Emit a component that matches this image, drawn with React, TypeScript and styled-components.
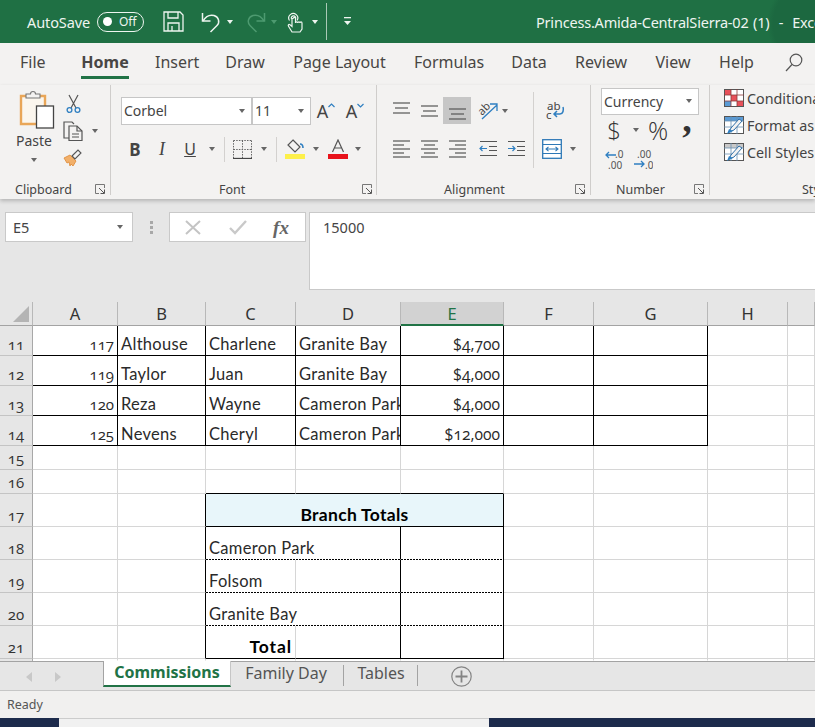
import React from "react";
import styled, { createGlobalStyle } from "styled-components";

const ui = `"Noto Sans", "Open Sans", sans-serif`;
const cellFont = `Lato, "Noto Sans", sans-serif`;
const figFont = `"Open Sans", "Noto Sans", sans-serif`;

const Global = createGlobalStyle`
  html, body { margin: 0; padding: 0; background: #fff; }
  * { box-sizing: border-box; }
`;

const Page = styled.div`
  width: 815px; height: 727px; overflow: hidden;
  display: flex; flex-direction: column;
  font-family: ${ui}; color: #444; background: #f3f2f1;
`;

/* ---------- title bar ---------- */
const TitleBar = styled.header`
  height: 43px; flex: none; display: flex; align-items: center;
  padding-left: 27px; color: #eef5f0;
  background: radial-gradient(circle at 815px 24px, #1c6840 0, #1c6840 42px, #1f7044 48px);
`;
const AutoSave = styled.span`font-size: 14.5px; width: 70px; flex: none; letter-spacing: -0.1px;`;
const Toggle = styled.span`
  width: 47px; height: 20px; flex: none; border: 1.3px solid #eef5f0; border-radius: 10px;
  display: flex; align-items: center; padding-left: 5px; gap: 7px; font-size: 12px;
`;
const Knob = styled.i`width: 9px; height: 9px; border-radius: 50%; background: #fff;`;
const Qat = styled.span<{ $w: number }>`
  width: ${p => p.$w}px; height: 30px; flex: none;
  display: flex; align-items: center; justify-content: center;
`;
const QatDivider = styled.i`width: 1px; height: 37px; background: #a9c9b6; flex: none;`;
const DocTitle = styled.span`
  font-size: 14.5px; white-space: pre; margin-left: 167px; letter-spacing: -0.2px;
  word-spacing: 1px; flex: none;
`;

/* ---------- tabs ---------- */
const TabStrip = styled.nav`
  height: 42px; flex: none; display: flex; align-items: flex-start;
  padding: 6px 0 0 20px; gap: 28px; background: #f3f2f1;
`;
const Tab = styled.span<{ $on?: boolean; $w: number }>`
  width: ${p => p.$w}px; height: 30px; flex: none; line-height: 26px; white-space: nowrap;
  font-size: 16px; font-weight: ${p => (p.$on ? 700 : 400)}; color: #484644;
  border-bottom: 3px solid ${p => (p.$on ? "#217346" : "transparent")};
  text-align: center;
  ${p => (p.$on ? "margin: 0 -2px 0 8px;" : "")}
`;
const TabSearch = styled.span`margin-left: 3px; padding-top: 4px; line-height: 0; flex: none;`;

/* ---------- ribbon ---------- */
const Ribbon = styled.section`
  height: 114px; flex: none; display: flex; background: #f3f2f1;
  box-shadow: 0 2px 4px rgba(0,0,0,.22); position: relative; z-index: 2;
`;
const Group = styled.div<{ $w: number; $open?: boolean }>`
  width: ${p => p.$w}px; height: 110px; flex: none; display: flex; flex-direction: column;
  border-right: ${p => (p.$open ? "none" : "1px solid #cfcdcb")};
`;
const GroupBody = styled.div<{ $top: number; $left: number }>`
  flex: 1; min-height: 0; padding: ${p => p.$top}px 0 0 ${p => p.$left}px;
  display: flex;
`;
const GroupFoot = styled.div<{ $left: number; $right: number }>`
  height: 12px; flex: none; display: flex; align-items: center; justify-content: space-between;
  padding: 0 ${p => p.$right}px 0 ${p => p.$left}px;
  font-size: 12.5px; color: #444; white-space: nowrap;
`;
const Launcher = styled.span`line-height: 0;`;
const Col = styled.div<{ $gap?: number; $w?: number }>`
  display: flex; flex-direction: column; gap: ${p => p.$gap ?? 0}px;
  ${p => (p.$w ? `width: ${p.$w}px; flex: none;` : "")}
`;
const Row = styled.div<{ $h: number }>`
  height: ${p => p.$h}px; display: flex; align-items: center; flex: none;
`;
const Slot = styled.span<{ $w: number; $on?: boolean }>`
  width: ${p => p.$w}px; height: 100%; flex: none;
  display: flex; align-items: center; justify-content: center;
  background: ${p => (p.$on ? "#c6c6c6" : "transparent")};
`;
const Caret = styled.i<{ $color?: string }>`
  width: 0; height: 0; flex: none;
  border-left: 3.5px solid transparent; border-right: 3.5px solid transparent;
  border-top: 4px solid ${p => p.$color ?? "#666"};
`;
const PasteLabel = styled.span`font-size: 14px; line-height: 20px; text-align: center; color: #444;`;
const PasteCol = styled.div`
  width: 40px; flex: none; display: flex; flex-direction: column; align-items: center;
  svg { margin: 0 0 2px 6px; }
`;
const CaretLine = styled.span`height: 18px; display: flex; align-items: center; justify-content: center;`;
const Select = styled.span<{ $w: number; $h: number }>`
  width: ${p => p.$w}px; height: ${p => p.$h}px; flex: none; background: #fff;
  border: 1px solid #c6c6c6; display: flex; align-items: center; justify-content: space-between;
  padding: 0 6px 1px 2px; font-size: 14px; color: #444;
`;
const GlyphBtn = styled.span<{ $b?: boolean; $i?: boolean; $u?: boolean; $size?: number }>`
  font-size: ${p => p.$size ?? 16}px; line-height: 1; color: #444;
  font-weight: ${p => (p.$b ? 700 : 400)};
  font-style: ${p => (p.$i ? "italic" : "normal")};
  text-decoration: ${p => (p.$u ? "underline" : "none")};
  font-family: ${p => (p.$i ? `"Liberation Serif", serif` : ui)};
`;
const ThinGlyph = styled.span<{ $size: number }>`
  font-family: "Open Sans", sans-serif; font-weight: 300; color: #333;
  font-size: ${p => p.$size}px; line-height: 1;
`;
const CommaGlyph = styled.span`
  font-family: "Liberation Serif", serif; font-weight: 700; color: #333;
  font-size: 38px; line-height: 1; transform: translateY(-11px);
`;
const GrowGlyph = styled.span`display: flex; align-items: flex-start; font-size: 18px; line-height: 1; color: #444;`;
const VRule = styled.i<{ $h: number }>`width: 1px; height: ${p => p.$h}px; background: #d3d1cf; display: block;`;
const AlignDivider = styled.i`width: 1px; height: 76px; background: #d3d1cf; margin: -5px 0 0 0; flex: none;`;
const TightCaret = styled(Caret)`margin-left: -3px;`;
const StyleRow = styled.div`
  display: flex; align-items: center; gap: 3px; height: 18px;
  font-size: 14.3px; color: #444; white-space: nowrap;
`;

/* ---------- formula bar ---------- */
const FormulaBar = styled.section`
  height: 103px; flex: none; background: #e6e6e6; display: flex; align-items: flex-start;
  padding: 13px 0 0 5px;
`;
const NameBox = styled.div`
  width: 128px; height: 30px; background: #fff; border: 1px solid #c9c9c9; flex: none;
  display: flex; align-items: center; justify-content: space-between;
  padding: 0 9px 0 7px; font-size: 14.5px; color: #444;
`;
const Grip = styled.div`
  width: 36px; height: 30px; flex: none; display: flex; flex-direction: column;
  align-items: center; justify-content: center; gap: 2px;
  i { width: 3px; height: 3px; background: #a8a8a8; display: block; }
`;
const FxBox = styled.div`
  width: 137px; height: 30px; background: #fff; border: 1px solid #c9c9c9; flex: none;
  display: flex; align-items: center;
`;
const FxGlyph = styled.span`
  font-family: "Liberation Serif", serif; font-style: italic; font-weight: 700;
  font-size: 19px; color: #666; line-height: 1; margin-right: 4px;
`;
const FormulaInput = styled.div`
  flex: 1; height: 78px; margin-left: 3px; background: #fff;
  border: 1px solid #c9c9c9; border-right: none;
  padding: 4px 0 0 13px; font-size: 14.5px; line-height: 20px; color: #444;
`;

/* ---------- sheet ---------- */
const Sheet = styled.main`
  height: 359px; flex: none; display: grid; background: #fff; overflow: hidden;
  grid-template-columns: 33px 85px 88px 90px 105px 103px 90px 114px 80px 27px;
  grid-template-rows: 24px 30px 30px 30px 30px 24px 24px 33px 33px 33px 33px 33px 2px;
`;
const Corner = styled.div`
  background: #e6e6e6; border-bottom: 1px solid #a3a3a3; border-right: 1px solid #b8b8b8;
  display: flex; align-items: flex-end; justify-content: flex-end; padding: 0 3px 3px 0;
`;
const ColHead = styled.div<{ $on?: boolean }>`
  background: ${p => (p.$on ? "#d2d2d2" : "#e6e6e6")};
  border-right: 1px solid #b8b8b8;
  border-bottom: ${p => (p.$on ? "2px solid #217346" : "1px solid #a3a3a3")};
  color: ${p => (p.$on ? "#217346" : "#333")};
  font-size: 16.5px; line-height: 23px; text-align: center;
`;
const RowHead = styled.div`
  background: #e6e6e6; border-right: 1px solid #a8a8a8; border-bottom: 1px solid #c4c4c4;
  font-family: ${figFont}; font-size: 15px; color: #333; line-height: 18px;
  font-variant-numeric: oldstyle-nums; font-feature-settings: "onum";
  display: flex; align-items: flex-end; justify-content: center; overflow: hidden;
  padding-bottom: 2px;
`;
const grid = "#d6d6d6";
const edge = (v?: string) =>
  v === "black" ? "1px solid #000" : v === "dotted" || v === "none" ? "1px solid transparent" : `1px solid ${grid}`;
const Cell = styled.div<{
  $r?: string; $b?: string; $span?: number; $clip?: boolean; $kind?: string;
}>`
  grid-column: ${p => (p.$span ? `span ${p.$span}` : "auto")};
  border-right: ${p => edge(p.$r)};
  border-bottom: ${p => edge(p.$b)};
  min-width: 0; position: relative; white-space: nowrap;
  overflow: ${p => (p.$clip ? "hidden" : "visible")};
  z-index: ${p => (p.$kind === "text" ? 1 : 0)};
  display: flex; align-items: flex-end; color: #2a2a2a;
  font-family: ${cellFont}; font-size: 16.5px; line-height: 22px; letter-spacing: .3px;
  padding: 0 3px 0 3px;
  ${p => (p.$b === "dotted" ? `
    background-image: repeating-linear-gradient(90deg, #000 0 2px, transparent 2px 3px);
    background-origin: border-box; background-clip: border-box;
    background-repeat: no-repeat; background-position: left bottom; background-size: 100% 1px;
  ` : "")}
  ${p => (p.$kind === "num" || p.$kind === "money" || p.$kind === "total" ? "justify-content: flex-end;" : "")}
  ${p => (p.$kind === "num" ? `font-family: ${figFont}; letter-spacing: 0; font-size: 15px; font-variant-numeric: oldstyle-nums; font-feature-settings: "onum";` : "")}
  ${p => (p.$kind === "money" ? `font-family: ${figFont}; letter-spacing: 0; font-size: 15.6px; font-variant-numeric: oldstyle-nums; font-feature-settings: "onum";` : "")}
  ${p => (p.$kind === "total" || p.$kind === "head" ? "font-weight: 700; font-size: 17.5px; color: #000;" : "")}
  ${p => (p.$kind === "total" ? "letter-spacing: .9px;" : "")}
  ${p => (p.$kind === "head" ? "justify-content: center; background: #e8f6fa;" : "")}
`;

/* ---------- sheet tabs & status ---------- */
const SheetBar = styled.footer`
  height: 30px; flex: none; background: #e6e6e6; display: flex; align-items: flex-start;
  border-top: 1px solid #a3a3a3; border-bottom: 1px solid #c6c6c6;
`;
const NavArrows = styled.div`
  width: 103px; height: 28px; flex: none; display: flex; align-items: center;
  padding: 2px 0 0 26px; gap: 23px;
`;
const NavArrow = styled.i<{ $dir: "l" | "r" }>`
  width: 0; height: 0;
  border-top: 5px solid transparent; border-bottom: 5px solid transparent;
  ${p => (p.$dir === "l" ? "border-right: 6px solid #c8c8c8;" : "border-left: 6px solid #c8c8c8;")}
`;
const ActiveSheet = styled.span`
  width: 128px; height: 26px; flex: none; background: #fff; text-align: center;
  border-left: 1px solid #a3a3a3; border-right: 1px solid #c6c6c6;
  border-bottom: 2px solid #217346; margin-top: -1px;
  color: #217346; font-weight: 700; font-size: 16px; line-height: 23px;
`;
const SheetName = styled.span<{ $w: number; $ml: number }>`
  width: ${p => p.$w}px; margin-left: ${p => p.$ml}px; flex: none; text-align: center;
  font-size: 16px; line-height: 22px; color: #555; white-space: nowrap;
`;
const SheetSep = styled.i<{ $ml: number }>`
  width: 1px; height: 21px; margin: 3px 0 0 ${p => p.$ml}px; background: #a3a3a3; flex: none;
`;
const AddSheet = styled.span`margin: 4px 0 0 33px; line-height: 0;`;
const Status = styled.div`
  height: 27px; flex: none; background: #f1f0ef; padding-left: 7px;
  font-size: 12.5px; line-height: 27px; color: #555;
`;
const Taskbar = styled.div`flex: 1; display: flex; background: #1d2b4c;`;
const TaskWindow = styled.div`width: 430px; margin-left: 59px; background: #f1f1f1; border-top: 1px solid #ccc;`;

/* ---------- icons ---------- */
const W = "#eef5f0";
const SaveIcon = () => (
  <svg width="21" height="21" viewBox="0 0 21 21" fill="none" stroke={W} strokeWidth="1.3">
    <path d="M1 1h16l3 3v16H1z" /><path d="M5 1v6h10V1M5 20v-8h11v8M9 15v5" />
  </svg>
);
const UndoIcon = () => (
  <svg width="20" height="22" viewBox="0 0 20 22" fill="none" stroke={W} strokeWidth="1.5">
    <path d="M1.5 2v8h8" /><path d="M2 10C5 5 9 3.5 13 4.5c5 1.500 6 7 3 10l-6.500 6.500" />
  </svg>
);
const RedoIcon = () => (
  <svg width="20" height="22" viewBox="0 0 20 22" fill="none" stroke="#4d9a70" strokeWidth="1.5">
    <path d="M18.500 2v8h-8" /><path d="M18 10C15 5 11 3.500 7 4.500c-5 1.500-6 7-3 10l6.500 6.500" />
  </svg>
);
const TouchIcon = () => (
  <svg width="16" height="22" viewBox="0 0 16 22" fill="none" stroke={W} strokeWidth="1.2">
    <path d="M2.500 9.500a4.500 4.500 0 1 1 7.500 0" /><path d="M4.500 8a2.200 2.200 0 1 1 4 0" />
    <path d="M5 7.500v8l-2-1.800c-1.200-.8-2.200.4-1.500 1.500L5 21h8l2-3v-6c0-1.500-2-1.500-2 0 0-1.500-2.200-1.500-2.200 0 0-1.500-2.300-1.500-2.300 0V7.500c0-1.500-2-1.500-2.500 0z" />
  </svg>
);
const CustomizeIcon = () => (
  <svg width="8" height="9" viewBox="0 0 8 9" fill={W}><rect y="0" width="7" height="1.300" /><path d="M0 4h7L3.500 8z" /></svg>
);
const SearchIcon = () => (
  <svg width="18" height="19" viewBox="0 0 18 19" fill="none" stroke="#555" strokeWidth="1.200">
    <circle cx="11" cy="7" r="5.800" /><path d="M7 11.500L1 18" />
  </svg>
);
const PasteIcon = () => (
  <svg width="36" height="39" viewBox="0 0 36 39" fill="none">
    <path d="M2 6h24v28H2z" fill="#fbf6ee" stroke="#e9a658" strokeWidth="2.400" />
    <path d="M7 8V4h4.500a2.500 2.500 0 0 1 5 0H21v4z" fill="#f3f2f1" stroke="#777" strokeWidth="1.100" />
    <rect x="17.500" y="16" width="17" height="22" fill="#fff" stroke="#444" strokeWidth="1.300" />
  </svg>
);
const CutIcon = () => (
  <svg width="15" height="20" viewBox="0 0 15 20" fill="none">
    <path d="M3 1l7 13M12 1L5 14" stroke="#555" strokeWidth="1.200" />
    <circle cx="3.500" cy="16" r="2.400" stroke="#2f7fc1" strokeWidth="1.300" />
    <circle cx="11.500" cy="16" r="2.400" stroke="#2f7fc1" strokeWidth="1.300" />
  </svg>
);
const CopyIcon = () => (
  <svg width="20" height="20" viewBox="0 0 20 20" fill="none" stroke="#555" strokeWidth="1.200">
    <path d="M6 17H1V1h8l2 2" /><path d="M6 5h8l5 5v9.500H6z" fill="#f3f2f1" /><path d="M14 5v5h5M9 13h7M9 16h7" />
  </svg>
);
const PainterIcon = () => (
  <svg width="20" height="20" viewBox="0 0 20 20">
    <path d="M1 10l6-3 6 6-3 5-2-2-1 2-1-4-2 1z" fill="#f2b06a" stroke="#e09040" strokeWidth=".9" />
    <path d="M9 8l6-6 3 3-6 6z" fill="#f3f2f1" stroke="#555" strokeWidth="1.100" />
  </svg>
);
const LauncherIcon = () => (
  <svg width="10" height="10" viewBox="0 0 10 10" fill="none" stroke="#777" strokeWidth="1">
    <path d="M9.500 4V.5H.5v9H4" /><path d="M4 4l5 5M9.500 5.500v4h-4" stroke="#555" />
  </svg>
);
const MiniChevron = ({ up }: { up?: boolean }) => (
  <svg width="7" height="5" viewBox="0 0 7 5" fill="none" stroke="#2f7fc1" strokeWidth="1.200" style={{ marginTop: 1 }}>
    <path d={up ? "M.5 4L3.500 1l3 3" : "M.5 1l3 3 3-3"} />
  </svg>
);
const BorderIcon = () => (
  <svg width="19" height="19" viewBox="0 0 19 19" fill="none" stroke="#666" strokeWidth="1" strokeDasharray="1.500 1.200">
    <path d="M.5.5h18M.5 9.500h18M.5.5v18M9.500.5v18M18.500.5v18" /><path d="M0 18.500h19" strokeDasharray="none" strokeWidth="1.300" stroke="#444" />
  </svg>
);
const FillIcon = () => (
  <svg width="20" height="20" viewBox="0 0 20 20">
    <path d="M8 1l7 7-5 5-7-7z" fill="#f3f2f1" stroke="#555" strokeWidth="1.200" />
    <path d="M15 5c2 0 3 2 3 4" fill="none" stroke="#2f7fc1" strokeWidth="1.600" />
    <rect y="15" width="20" height="5" fill="#fdf04a" />
  </svg>
);
const FontColorIcon = () => (
  <svg width="20" height="20" viewBox="0 0 20 20">
    <path d="M4.500 13L10 1l5.500 12M6.500 9h7" fill="none" stroke="#555" strokeWidth="1.200" />
    <rect y="15" width="20" height="5" fill="#e8131b" />
  </svg>
);
const Lines = ({ rows }: { rows: [number, number, number][] }) => (
  <svg width="19" height="19" viewBox="0 0 19 19" stroke="#555" strokeWidth="1.200">
    {rows.map(([y, a, b], i) => <path key={i} d={`M${a} ${y}H${b}`} />)}
  </svg>
);
const OrientIcon = () => (
  <svg width="21" height="20" viewBox="0 0 21 20" fill="none">
    <text x="1" y="12" fontSize="11" fontFamily="Noto Sans" fill="#444" transform="rotate(-45 6 10)">ab</text>
    <path d="M4 18L19 4M12 3h7v7" stroke="#2f7fc1" strokeWidth="1.300" />
  </svg>
);
const IndentIcon = ({ right }: { right?: boolean }) => (
  <svg width="19" height="17" viewBox="0 0 19 17" stroke="#555" strokeWidth="1.200" fill="none">
    <path d="M1 1.500h17M10 6.500h8M10 10.500h8M1 15.500h17" />
    <path d={right ? "M1 8.500h7M5.500 6l2.500 2.500L5.500 11" : "M1 8.500h7M3.500 6L1 8.500 3.500 11"} stroke="#2f7fc1" />
  </svg>
);
const WrapIcon = () => (
  <svg width="19" height="20" viewBox="0 0 19 20" fill="none">
    <text x="1" y="9" fontSize="11.500" fontFamily="Noto Sans" fill="#444">ab</text>
    <text x="0" y="18" fontSize="11.500" fontFamily="Noto Sans" fill="#444">c</text>
    <path d="M17 6c1 3 0 7-3 7H8M11 10l-3 3 3 3" stroke="#2f7fc1" strokeWidth="1.500" />
  </svg>
);
const MergeIcon = () => (
  <svg width="20" height="20" viewBox="0 0 20 20" fill="none">
    <rect x=".7" y=".7" width="18.600" height="18.600" fill="#fff" stroke="#2d78b6" strokeWidth="1.300" />
    <path d="M1 5.500h18M1 14.500h18" stroke="#2d78b6" />
    <path d="M4 10h12M6.500 7.800L4 10l2.500 2.200M13.500 7.800L16 10l-2.500 2.200" stroke="#2d78b6" strokeWidth="1.100" />
  </svg>
);
const DecimalIcon = ({ more }: { more?: boolean }) => (
  <svg width="20" height="21" viewBox="0 0 20 21" fill="none">
    {more ? (
      <>
        <text x="4" y="9" fontSize="10" fontFamily="Noto Sans" fill="#555">.00</text>
        <text x="12" y="20" fontSize="10" fontFamily="Noto Sans" fill="#555">.0</text>
        <path d="M1 15h10M8 12l3 3-3 3" stroke="#2f7fc1" strokeWidth="1.300" />
      </>
    ) : (
      <>
        <text x="10" y="9" fontSize="10" fontFamily="Noto Sans" fill="#555">.0</text>
        <text x="3" y="20" fontSize="10" fontFamily="Noto Sans" fill="#555">.00</text>
        <path d="M1 6h10M4 3L1 6l3 3" stroke="#2f7fc1" strokeWidth="1.300" />
      </>
    )}
  </svg>
);
const CondIcon = () => (
  <svg width="20" height="18" viewBox="0 0 20 18" fill="none">
    <rect x=".5" y=".5" width="19" height="17" fill="#fff" stroke="#555" />
    <rect x="1" y="1" width="6" height="5" fill="#e8515a" />
    <rect x="7" y="6" width="6" height="6" fill="#e8515a" />
    <rect x="13" y="12" width="6" height="5" fill="#e8515a" />
    <rect x="1" y="12" width="6" height="5" fill="#5b9bd5" />
    <path d="M7 0v18M13 0v18M0 6h20M0 12h20" stroke="#8a3a3a" strokeWidth=".8" />
  </svg>
);
const TableIcon = ({ head }: { head: string }) => (
  <svg width="20" height="18" viewBox="0 0 20 18" fill="none">
    <rect x=".5" y=".5" width="19" height="17" fill="#fff" stroke="#555" />
    <rect x="1" y="1" width="18" height="4" fill={head} />
    <path d="M7 0v18M13 0v18M0 5h20M0 11h20" stroke="#6a8fb0" strokeWidth=".8" />
    <path d="M5 16l2-4 8-9 3 2-8 9z" fill="#f3f2f1" stroke="#2f6fa8" />
    <path d="M3 18l2-5 4 2z" fill="#2f7fc1" />
  </svg>
);
const AddIcon = () => (
  <svg width="21" height="21" viewBox="0 0 21 21" fill="none" stroke="#848484">
    <circle cx="10.500" cy="10.500" r="9.700" strokeWidth="1.200" /><path d="M10.500 4.500v12M4.500 10.500h12" strokeWidth="1.800" />
  </svg>
);
const CancelIcon = () => (
  <svg width="16" height="15" viewBox="0 0 16 15" fill="none" stroke="#c4c4c4" strokeWidth="2"><path d="M1 1l14 13M15 1L1 14" /></svg>
);
const EnterIcon = () => (
  <svg width="18" height="15" viewBox="0 0 18 15" fill="none" stroke="#c9c9c9" strokeWidth="2.400"><path d="M1 8l5 5L17 1" /></svg>
);
const CornerMark = () => (
  <svg width="16" height="16" viewBox="0 0 16 16"><path d="M16 0v16H0z" fill="#b4b4b4" /></svg>
);

/* ---------- data ---------- */
type Spec = { t?: string; k?: string; r?: string; b?: string; span?: number; clip?: boolean };
const blank: Spec = {};
const boxed: Spec = { r: "black", b: "black" };
const dataRow = (id: string, l: string, f: string, br: string, amt: string): Spec[] => [
  { t: id, k: "num", ...boxed }, { t: l, k: "text", ...boxed }, { t: f, k: "text", ...boxed },
  { t: br, k: "text", clip: true, ...boxed }, { t: amt, k: "money", ...boxed },
  boxed, boxed, blank, blank,
];
const branchRow = (label: string | undefined, kind: string, cr: string, last: boolean): Spec[] => {
  const b = last ? "black" : "dotted";
  return [blank, { r: "black" }, { t: label, k: kind, r: cr, b }, { r: "black", b }, { r: "black", b }, blank, blank, blank, blank];
};
const top = (x: Spec) => ({ ...x, b: "black" });
const rows: { n: string; cells: Spec[] }[] = [
  { n: "11", cells: dataRow("117", "Althouse", "Charlene", "Granite Bay", "$4,700") },
  { n: "12", cells: dataRow("119", "Taylor", "Juan", "Granite Bay", "$4,000") },
  { n: "13", cells: dataRow("120", "Reza", "Wayne", "Cameron Park", "$4,000") },
  { n: "14", cells: dataRow("125", "Nevens", "Cheryl", "Cameron Park", "$12,000") },
  { n: "15", cells: Array(9).fill(blank) },
  { n: "16", cells: [blank, blank, top(blank), top(blank), top(blank), blank, blank, blank, blank] },
  { n: "17", cells: [blank, { r: "black" }, { t: "Branch Totals", k: "head", span: 3, r: "black", b: "black" }, blank, blank, blank, blank] },
  { n: "18", cells: branchRow("Cameron Park", "text", "none", false) },
  { n: "19", cells: branchRow("Folsom", "text", "grid", false) },
  { n: "20", cells: branchRow("Granite Bay", "text", "none", false) },
  { n: "21", cells: branchRow("Total", "total", "grid", true) },
];
const heads = ["A", "B", "C", "D", "E", "F", "G", "H", ""];

export default function App() {
  return (
    <Page>
      <Global />
      <TitleBar>
        <AutoSave>AutoSave</AutoSave>
        <Toggle><Knob />Off</Toggle>
        <Qat $w={19} />
        <Qat $w={21}><SaveIcon /></Qat>
        <Qat $w={17} />
        <Qat $w={20}><UndoIcon /></Qat>
        <Qat $w={18}><Caret $color="#eef5f0" /></Qat>
        <Qat $w={7} />
        <Qat $w={20}><RedoIcon /></Qat>
        <Qat $w={16}><Caret $color="#4d9a70" /></Qat>
        <Qat $w={5} />
        <Qat $w={16}><TouchIcon /></Qat>
        <Qat $w={23}><Caret $color="#eef5f0" /></Qat>
        <QatDivider />
        <Qat $w={42}><CustomizeIcon /></Qat>
        <DocTitle>Princess.Amida-CentralSierra-02 (1)  -  Excel</DocTitle>
      </TitleBar>

      <TabStrip>
        <Tab $w={25}>File</Tab>
        <Tab $w={48} $on>Home</Tab>
        <Tab $w={42}>Insert</Tab>
        <Tab $w={40}>Draw</Tab>
        <Tab $w={93}>Page Layout</Tab>
        <Tab $w={69}>Formulas</Tab>
        <Tab $w={36}>Data</Tab>
        <Tab $w={52}>Review</Tab>
        <Tab $w={36}>View</Tab>
        <Tab $w={35}>Help</Tab>
        <TabSearch><SearchIcon /></TabSearch>
      </TabStrip>

      <Ribbon>
        <Group $w={111}>
          <GroupBody $top={5} $left={14}>
            <PasteCol>
              <PasteIcon />
              <PasteLabel>Paste</PasteLabel>
              <CaretLine><Caret /></CaretLine>
            </PasteCol>
            <Col $w={42}>
              <Row $h={27}><Slot $w={38}><CutIcon /></Slot></Row>
              <Row $h={27}><Slot $w={38}><CopyIcon /></Slot><Caret /></Row>
              <Row $h={27}><Slot $w={38}><PainterIcon /></Slot></Row>
            </Col>
          </GroupBody>
          <GroupFoot $left={15} $right={5}><span>Clipboard</span><Launcher><LauncherIcon /></Launcher></GroupFoot>
        </Group>

        <Group $w={266}>
          <GroupBody $top={12} $left={10}>
            <Col $gap={10}>
              <Row $h={28}>
                <Select $w={131} $h={28}>Corbel<Caret /></Select>
                <Select $w={59} $h={28}>11<Caret /></Select>
                <Slot $w={30}><GrowGlyph>A<MiniChevron up /></GrowGlyph></Slot>
                <Slot $w={28}><GrowGlyph>A<MiniChevron /></GrowGlyph></Slot>
              </Row>
              <Row $h={28}>
                <Slot $w={28}><GlyphBtn $b $size={17}>B</GlyphBtn></Slot>
                <Slot $w={26}><GlyphBtn $i $size={18}>I</GlyphBtn></Slot>
                <Slot $w={30}><GlyphBtn $u>U</GlyphBtn></Slot>
                <Slot $w={14}><Caret /></Slot>
                <Slot $w={10}><VRule $h={25} /></Slot>
                <Slot $w={26}><BorderIcon /></Slot>
                <Slot $w={18}><Caret /></Slot>
                <Slot $w={6}><VRule $h={25} /></Slot>
                <Slot $w={32}><FillIcon /></Slot>
                <Slot $w={10}><Caret /></Slot>
                <Slot $w={34}><FontColorIcon /></Slot>
                <Slot $w={6}><Caret /></Slot>
              </Row>
            </Col>
          </GroupBody>
          <GroupFoot $left={108} $right={4}><span>Font</span><Launcher><LauncherIcon /></Launcher></GroupFoot>
        </Group>

        <Group $w={214}>
          <GroupBody $top={12} $left={10}>
            <Col $gap={11} $w={146}>
              <Row $h={27}>
                <Slot $w={28}><Lines rows={[[2, 1, 18], [7, 3, 16], [12, 1, 18]]} /></Slot>
                <Slot $w={28}><Lines rows={[[5, 1, 18], [10, 3, 16], [15, 1, 18]]} /></Slot>
                <Slot $w={28} $on><Lines rows={[[8, 1, 18], [13, 3, 16], [18, 1, 18]]} /></Slot>
                <Slot $w={34}><OrientIcon /></Slot>
                <TightCaret />
              </Row>
              <Row $h={27}>
                <Slot $w={28}><Lines rows={[[2, 1, 18], [6, 1, 12], [10, 1, 18], [14, 1, 12], [18, 1, 18]]} /></Slot>
                <Slot $w={28}><Lines rows={[[2, 1, 18], [6, 4, 15], [10, 1, 18], [14, 4, 15], [18, 1, 18]]} /></Slot>
                <Slot $w={28}><Lines rows={[[2, 1, 18], [6, 7, 18], [10, 1, 18], [14, 7, 18], [18, 1, 18]]} /></Slot>
                <Slot $w={34}><IndentIcon /></Slot>
                <Slot $w={22}><IndentIcon right /></Slot>
              </Row>
            </Col>
            <AlignDivider />
            <Col $gap={11}>
              <Row $h={27}><Slot $w={42}><WrapIcon /></Slot></Row>
              <Row $h={27}><Slot $w={36}><MergeIcon /></Slot><Caret /></Row>
            </Col>
          </GroupBody>
          <GroupFoot $left={67} $right={5}><span>Alignment</span><Launcher><LauncherIcon /></Launcher></GroupFoot>
        </Group>

        <Group $w={119}>
          <GroupBody $top={3} $left={10}>
            <Col>
              <Select $w={98} $h={27}>Currency<Caret /></Select>
              <Row $h={30}>
                <Slot $w={26}><ThinGlyph $size={24}>$</ThinGlyph></Slot>
                <Slot $w={18}><Caret /></Slot>
                <Slot $w={26}><ThinGlyph $size={25}>%</ThinGlyph></Slot>
                <Slot $w={32}><CommaGlyph>,</CommaGlyph></Slot>
              </Row>
              <Row $h={28}>
                <Slot $w={28}><DecimalIcon /></Slot>
                <Slot $w={28}><DecimalIcon more /></Slot>
              </Row>
            </Col>
          </GroupBody>
          <GroupFoot $left={25} $right={5}><span>Number</span><Launcher><LauncherIcon /></Launcher></GroupFoot>
        </Group>

        <Group $w={200} $open>
          <GroupBody $top={4} $left={14}>
            <Col $gap={9}>
              <StyleRow><CondIcon />Conditional Formatting</StyleRow>
              <StyleRow><TableIcon head="#5b9bd5" />Format as Table</StyleRow>
              <StyleRow><TableIcon head="#c9c9c9" />Cell Styles</StyleRow>
            </Col>
          </GroupBody>
          <GroupFoot $left={92} $right={0}><span>Styles</span></GroupFoot>
        </Group>
      </Ribbon>

      <FormulaBar>
        <NameBox>E5<Caret /></NameBox>
        <Grip><i /><i /><i /></Grip>
        <FxBox>
          <Slot $w={45}><CancelIcon /></Slot>
          <Slot $w={46}><EnterIcon /></Slot>
          <Slot $w={44}><FxGlyph>fx</FxGlyph></Slot>
        </FxBox>
        <FormulaInput>15000</FormulaInput>
      </FormulaBar>

      <Sheet>
        <Corner><CornerMark /></Corner>
        {heads.map((h, i) => <ColHead key={i} $on={h === "E"}>{h}</ColHead>)}
        {rows.map(row => (
          <React.Fragment key={row.n}>
            <RowHead>{row.n}</RowHead>
            {row.cells.map((c, i) => (
              <Cell key={i} $r={c.r} $b={c.b} $span={c.span} $clip={c.clip} $kind={c.k}>{c.t}</Cell>
            ))}
          </React.Fragment>
        ))}
        <RowHead />
        {Array.from({ length: 9 }, (_, i) => <Cell key={i} $b="none" />)}
      </Sheet>

      <SheetBar>
        <NavArrows><NavArrow $dir="l" /><NavArrow $dir="r" /></NavArrows>
        <ActiveSheet>Commissions</ActiveSheet>
        <SheetName $w={82} $ml={14}>Family Day</SheetName>
        <SheetSep $ml={16} />
        <SheetName $w={48} $ml={13}>Tables</SheetName>
        <SheetSep $ml={12} />
        <AddSheet><AddIcon /></AddSheet>
      </SheetBar>
      <Status>Ready</Status>
      <Taskbar><TaskWindow /></Taskbar>
    </Page>
  );
}
